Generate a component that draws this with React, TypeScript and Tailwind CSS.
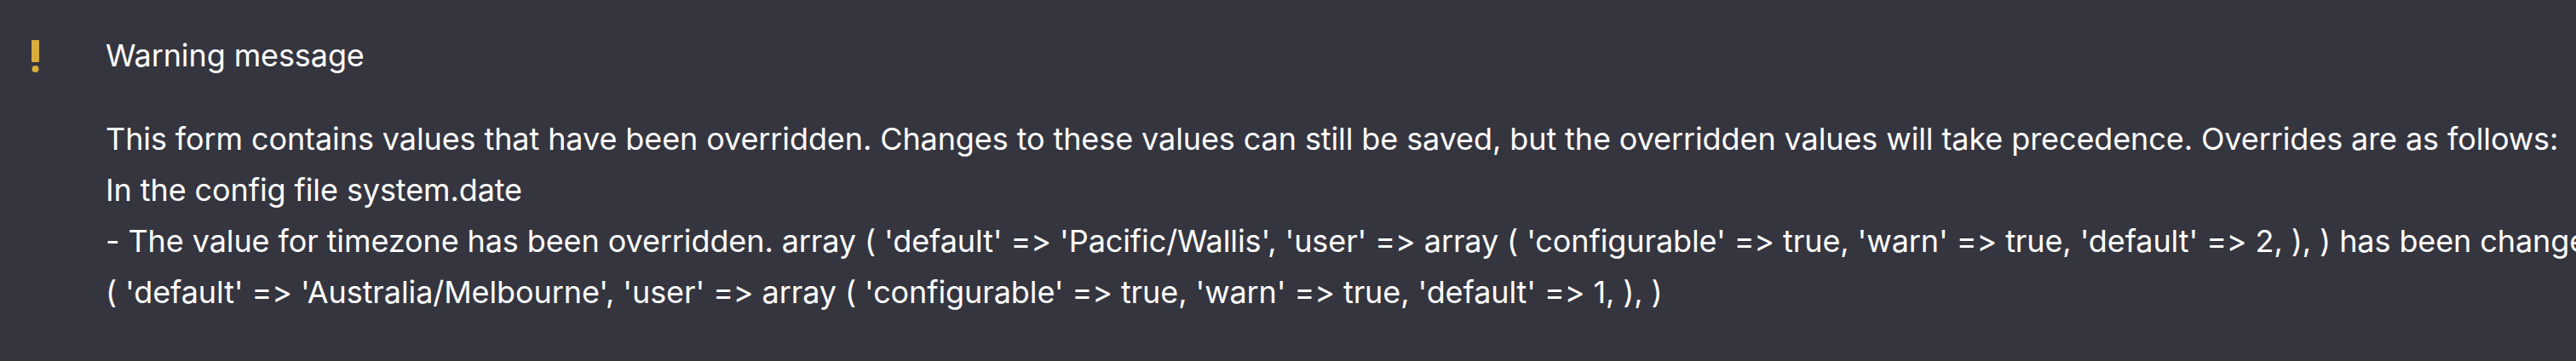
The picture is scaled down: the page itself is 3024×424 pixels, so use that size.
export default function App() {
  return (
    <div className="h-[424px] w-full overflow-hidden bg-[#35353f] font-['Inter',sans-serif] text-[36px] leading-[60px] tracking-[-0.1px] text-white [font-feature-settings:'calt'_0,'liga'_0]">
      <div className="flex pl-[37px] pt-[35px]">
        <div className="w-[9px] shrink-0 pt-[12px]">
          <svg width="9" height="38" viewBox="0 0 9 38" fill="#d8ad39">
            <rect x="0" y="0" width="9" height="26" rx="1" />
            <circle cx="4.5" cy="34" r="4" />
          </svg>
        </div>
        <div className="ml-[78px] whitespace-nowrap">
          <h2>Warning message</h2>
          <div className="mt-[38px]">
            <p>
              This form contains values that have been overridden. Changes to these values can still be saved, but the
              overridden values will take precedence. Overrides are as follows:
            </p>
            <p>In the config file system.date</p>
            <p>
              - The value for timezone has been overridden. array ( 'default' =&gt; 'Pacific/Wallis', 'user' =&gt; array (
              'configurable' =&gt; true, 'warn' =&gt; true, 'default' =&gt; 2, ), ) has been changed to array
            </p>
            <p>( 'default' =&gt; 'Australia/Melbourne', 'user' =&gt; array ( 'configurable' =&gt; true, 'warn' =&gt; true, 'default' =&gt; 1, ), )</p>
          </div>
        </div>
      </div>
    </div>
  )
}
